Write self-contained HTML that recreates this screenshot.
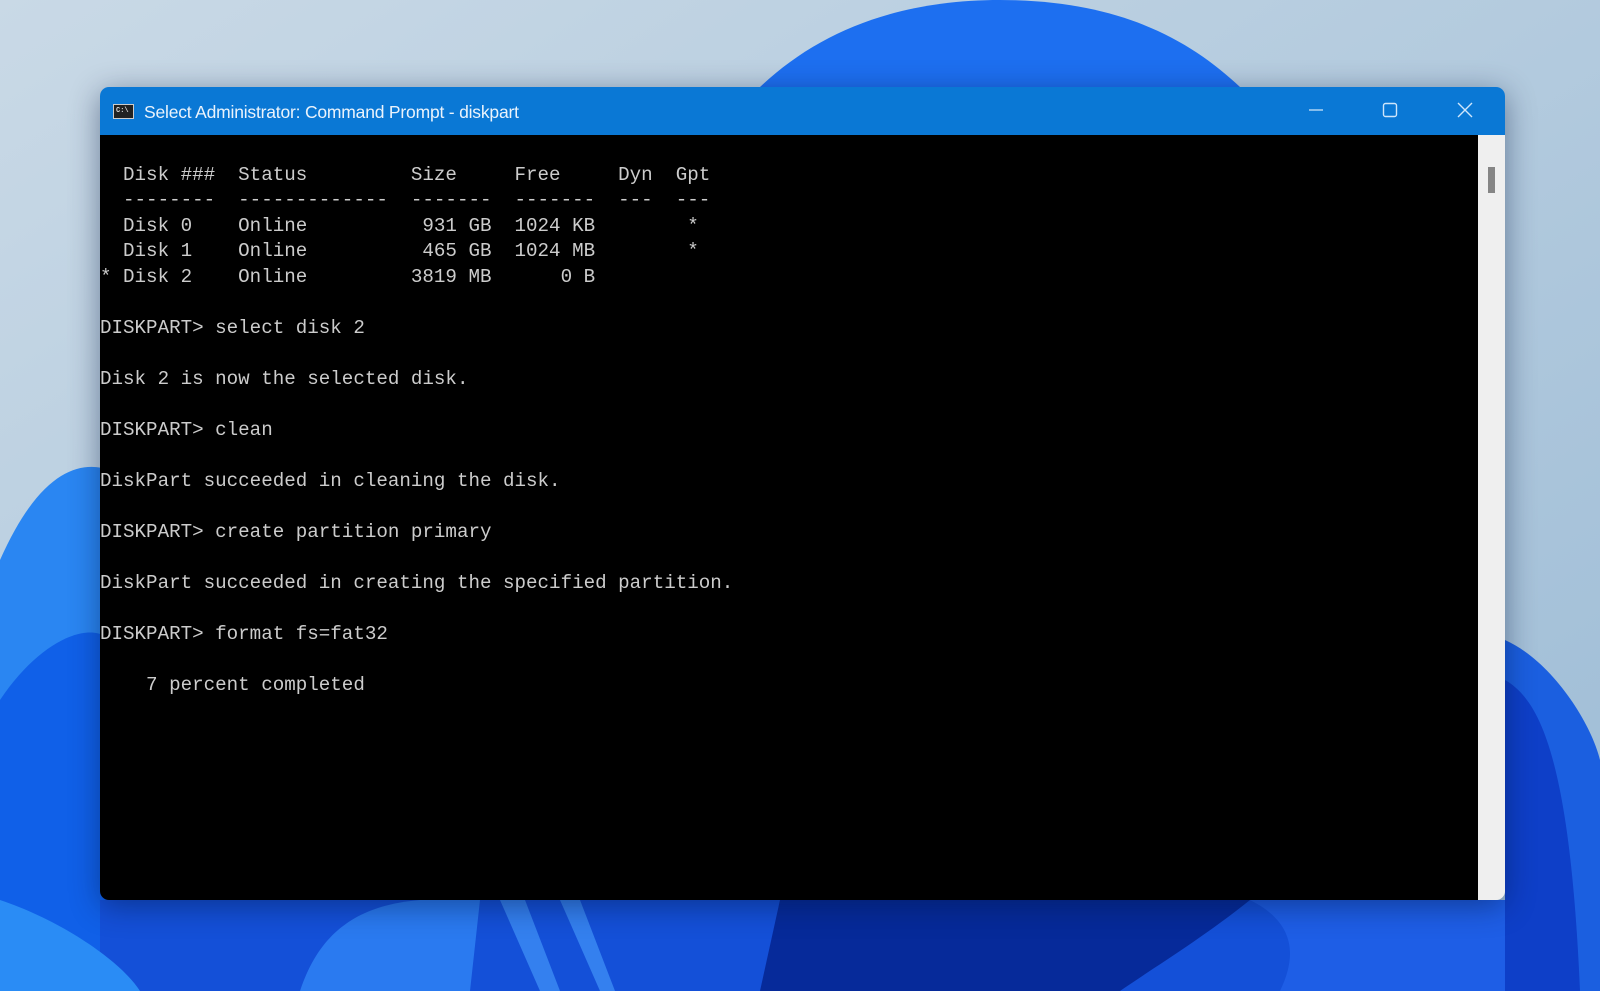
<!DOCTYPE html>
<html><head><meta charset="utf-8"><style>
html,body{margin:0;padding:0;width:1600px;height:991px;overflow:hidden;background:#a7c3da;}
.bg{position:absolute;left:0;top:0;width:1600px;height:991px}
.win{position:absolute;left:100px;top:87px;width:1405px;height:813px;border-radius:9px;overflow:hidden;box-shadow:0 6px 30px rgba(0,20,60,.45);}
.title{position:absolute;left:0;top:0;width:1405px;height:48px;background:#0a78d5;}
.title .t{position:absolute;left:44px;top:15px;font:17.5px "Liberation Sans",sans-serif;color:#eaf3fc;letter-spacing:-0.2px}
.icon{position:absolute;left:13px;top:17px;width:21px;height:15px;background:#222;border:1px solid #ccc;box-sizing:border-box;}
.icon span{position:absolute;left:2px;top:2px;font:bold 7px "Liberation Mono",monospace;color:#ddd}
.con{position:absolute;left:0;top:48px;width:1378px;height:765px;background:#000;}
.sb{position:absolute;left:1378px;top:48px;width:27px;height:765px;background:#efefef;}
.thumb{position:absolute;left:10px;top:32px;width:7px;height:26px;background:#858585;}
pre{position:absolute;left:0;top:27.5px;margin:0;font:19.2px/25.5px "Liberation Mono",monospace;color:#cccccc;white-space:pre;}
.ctl{position:absolute;top:2px;height:48px;color:#cfe6fb}
</style></head><body>
<svg class="bg" viewBox="0 0 1600 991">
<defs>
<linearGradient id="g1" x1="0" y1="0" x2="1" y2="1"><stop offset="0" stop-color="#c9d9e6"/><stop offset="1" stop-color="#9dbcd6"/></linearGradient>
</defs>
<rect width="1600" height="991" fill="url(#g1)"/>
<path d="M760 87 C820 30 900 0 1000 0 C1120 0 1190 40 1240 87 Z" fill="#1d6ff0"/>
<path d="M0 560 C40 470 80 460 110 470 L110 991 L0 991 Z" fill="#2a86f2"/>
<path d="M0 700 C40 640 90 620 110 640 L110 991 L0 991Z" fill="#1060e8"/>
<path d="M1505 640 C1550 660 1590 720 1600 760 L1600 991 L1505 991Z" fill="#1b5fe0"/>
<path d="M1505 680 C1540 700 1570 760 1580 991 L1505 991Z" fill="#0e3fc8"/>
<rect x="100" y="900" width="1405" height="91" fill="#1450d8"/>
<path d="M300 991 C320 930 360 905 420 900 L480 900 L470 991Z" fill="#2a7af0"/>
<path d="M780 900 L1250 900 C1200 940 1150 970 1120 991 L760 991Z" fill="#062a9a"/>
<path d="M1250 900 L1505 900 L1505 991 L1280 991 C1300 950 1290 920 1250 900Z" fill="#1e5ee6"/>
<path d="M500 900 L540 991 L560 991 L525 900Z M560 900 L600 991 L615 991 L580 900Z" fill="#4aa0ff" opacity=".6"/>
<path d="M0 991 L0 900 C60 920 120 960 140 991Z" fill="#2a8cf5"/>
</svg>
<div class="win">
<div class="title"><div class="icon"><span>C:\</span></div><div class="t">Select Administrator: Command Prompt - diskpart</div>
<svg class="ctl" style="left:1196px" width="40" height="48"><line x1="13" y1="21" x2="27" y2="21" stroke="#cfe6fb" stroke-width="1.3"/></svg>
<svg class="ctl" style="left:1270px" width="40" height="48"><rect x="13.5" y="14.5" width="13" height="13" rx="2" fill="none" stroke="#cfe6fb" stroke-width="1.4"/></svg>
<svg class="ctl" style="left:1345px" width="40" height="48"><path d="M13 14 L27 28 M27 14 L13 28" stroke="#cfe6fb" stroke-width="1.4"/></svg>
</div>
<div class="con"><pre>  Disk ###  Status         Size     Free     Dyn  Gpt
  --------  -------------  -------  -------  ---  ---
  Disk 0    Online          931 GB  1024 KB        *
  Disk 1    Online          465 GB  1024 MB        *
* Disk 2    Online         3819 MB      0 B

DISKPART> select disk 2

Disk 2 is now the selected disk.

DISKPART> clean

DiskPart succeeded in cleaning the disk.

DISKPART> create partition primary

DiskPart succeeded in creating the specified partition.

DISKPART> format fs=fat32

    7 percent completed</pre></div>
<div class="sb"><div class="thumb"></div></div>
</div>
</body></html>
